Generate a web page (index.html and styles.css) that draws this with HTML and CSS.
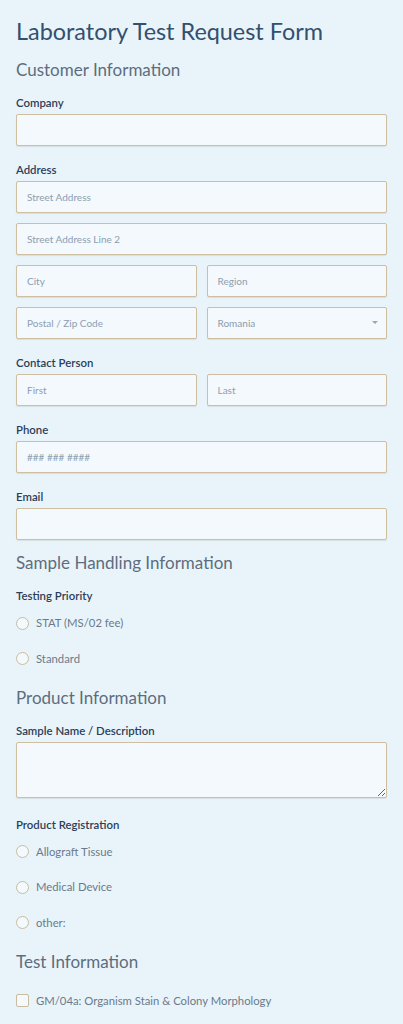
FILE: index.html
```html
<!DOCTYPE html>
<html lang="en">
<head>
  <meta charset="UTF-8" />
  <meta name="viewport" content="width=device-width, initial-scale=1.0" />
  <title>Laboratory Test Request Form</title>
  <link rel="stylesheet" href="styles.css">
</head>
<body>

  <form class="form" id="lab-request">
    <h1>Laboratory Test Request Form</h1>

    <!-- Customer -->
    <h2>Customer Information</h2>

    <div class="field">
      <label for="company">Company</label>
      <input type="text" id="company" />
    </div>

    <div class="field">
      <label for="street">Address</label>
      <div class="stack">
        <input type="text" id="street" placeholder="Street Address" />
        <input type="text" id="street-2" placeholder="Street Address Line 2" />
        <div class="row">
          <input type="text" id="city" placeholder="City" />
          <input type="text" id="region" placeholder="Region" />
        </div>
        <div class="row">
          <input type="text" id="zip" placeholder="Postal / Zip Code" />
          <div class="select">
            <select id="country">
              <option>Romania</option>
            </select>
          </div>
        </div>
      </div>
    </div>

    <div class="field">
      <label for="first">Contact Person</label>
      <div class="row">
        <input type="text" id="first" placeholder="First" />
        <input type="text" id="last" placeholder="Last" />
      </div>
    </div>

    <div class="field">
      <label for="phone">Phone</label>
      <input type="tel" id="phone" placeholder="### ### ####" />
    </div>

    <div class="field">
      <label for="email">Email</label>
      <input type="email" id="email" />
    </div>

    <!-- Sample handling -->
    <h2>Sample Handling Information</h2>

    <div class="field">
      <label>Testing Priority</label>
      <div class="choices">
        <label class="choice"><input type="radio" name="priority" /> STAT (MS/02 fee)</label>
        <label class="choice"><input type="radio" name="priority" /> Standard</label>
      </div>
    </div>

    <!-- Product -->
    <h2>Product Information</h2>

    <div class="field">
      <label for="sample">Sample Name / Description</label>
      <textarea id="sample"></textarea>
    </div>

    <div class="field">
      <label>Product Registration</label>
      <div class="choices">
        <label class="choice"><input type="radio" name="registration" /> Allograft Tissue</label>
        <label class="choice"><input type="radio" name="registration" /> Medical Device</label>
        <label class="choice"><input type="radio" name="registration" /> other:</label>
      </div>
    </div>

    <!-- Tests -->
    <h2>Test Information</h2>

    <div class="choices tests">
      <label class="choice"><input type="checkbox" /> GM/04a: Organism Stain &amp; Colony Morphology</label>
    </div>
  </form>

</body>
</html>
```

FILE: styles.css
```css
body {
  font-family: Lato, "Open Sans", sans-serif;
  background: #e9f4fa;
  margin: 0;
  padding: 0;
}
.form {
  display: flex;
  flex-direction: column;
  padding: 16px 16px 0;
}
h1 {
  font-size: 23.4px;
  line-height: 30px;
  font-weight: 400;
  color: #32506f;
  margin: 0 0 12px;
}
h2 {
  font-size: 17px;
  line-height: 24px;
  font-weight: 400;
  color: #5d6d7e;
  margin: 11px 0 13px;
}
h1 + h2 {
  margin-top: 0;
}
.field {
  margin-top: 16px;
}
h2 + .field {
  margin-top: 0;
}
.field > label {
  display: block;
  font-size: 11.4px;
  line-height: 16px;
  font-weight: 600;
  color: #2c3e58;
  margin-bottom: 3px;
}
.stack {
  display: flex;
  flex-direction: column;
  gap: 10px;
}
.row {
  display: grid;
  grid-template-columns: 1fr 1fr;
  gap: 10px;
}
input[type="text"],
input[type="tel"],
input[type="email"],
select,
textarea {
  display: block;
  width: 100%;
  height: 32px;
  padding: 0 10px;
  margin: 0;
  background: #f3f9fd;
  border: 1px solid #cdbf9f;
  border-radius: 2px;
  box-shadow: 0 1px 1px rgba(120, 110, 80, 0.15);
  font-family: inherit;
  font-size: 10px;
  color: #8b9bad;
  box-sizing: border-box;
}
input::placeholder {
  color: #8d9eb1;
}
textarea {
  height: 56px;
  resize: vertical;
  margin-bottom: 3px;
}
.select {
  position: relative;
}
select {
  appearance: none;
  -webkit-appearance: none;
}
.select::after {
  content: "";
  position: absolute;
  right: 9px;
  top: 14px;
  border-left: 3px solid transparent;
  border-right: 3px solid transparent;
  border-top: 3px solid #9aa7b5;
  pointer-events: none;
}
.choices {
  display: flex;
  flex-direction: column;
  gap: 19.5px;
  padding-top: 8px;
}
.field .choices {
  margin-bottom: 8px;
}
.tests {
  padding-top: 6px;
}
.choice {
  display: flex;
  align-items: center;
  gap: 7px;
  font-size: 11.3px;
  line-height: 16px;
  color: #6a7a8c;
}
.choice input {
  appearance: none;
  -webkit-appearance: none;
  width: 13px;
  height: 13px;
  margin: 0;
  border: 1px solid #c9bc9e;
  background: #f3f9fd;
}
.choice input[type="radio"] {
  border-radius: 50%;
}
.choice input[type="checkbox"] {
  border-radius: 2px;
}
```
